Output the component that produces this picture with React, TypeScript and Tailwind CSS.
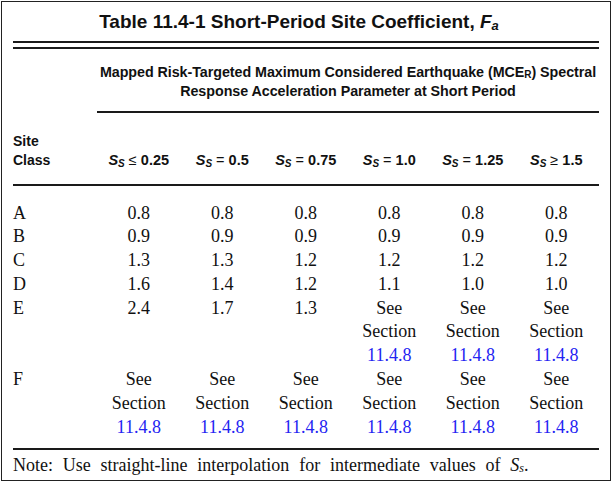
const SANS = { fontFamily: '"Liberation Sans", Arial, sans-serif' };
const SERIF = { fontFamily: '"Liberation Serif", "Times New Roman", serif' };

type Cell = string | null; // null = "See Section 11.4.8"

const rows: [string, Cell[]][] = [
  ['A', ['0.8', '0.8', '0.8', '0.8', '0.8', '0.8']],
  ['B', ['0.9', '0.9', '0.9', '0.9', '0.9', '0.9']],
  ['C', ['1.3', '1.3', '1.2', '1.2', '1.2', '1.2']],
  ['D', ['1.6', '1.4', '1.2', '1.1', '1.0', '1.0']],
  ['E', ['2.4', '1.7', '1.3', null, null, null]],
  ['F', [null, null, null, null, null, null]],
];

const headers: [string, string][] = [
  ['≤', '0.25'],
  ['=', '0.5'],
  ['=', '0.75'],
  ['=', '1.0'],
  ['=', '1.25'],
  ['≥', '1.5'],
];

function Ss() {
  return (
    <span className="italic">
      S<sub className="relative top-[2px] align-baseline text-[10px]">S</sub>
    </span>
  );
}

function SeeSection() {
  return (
    <>
      <div>See</div>
      <div>Section</div>
      <div className="text-[#2424f2]">11.4.8</div>
    </>
  );
}

export default function App() {
  return (
    <div className="h-[483px] w-[613px] bg-white p-px text-[#111]">
      <div className="h-[480px] w-[610px] overflow-hidden border border-[#222] pl-[11px] pr-[11px] pt-[8px]">
        <h1
          className="pr-[14px] text-center text-[19px] font-bold leading-[24px]"
          style={SANS}
        >
          Table 11.4-1 Short-Period Site Coefficient,{' '}
          <span className="italic">
            F<sub className="relative top-[2px] align-baseline text-[13px]">a</sub>
          </span>
        </h1>
        <div className="mt-[7px] h-[2px] bg-[#1a1a1a]" />
        <div className="mt-[4px] h-[2px] bg-[#1a1a1a]" />

        <div className="ml-[84px]">
          <p
            className="mt-[13.5px] whitespace-nowrap text-center text-[14.3px] font-bold leading-[19.5px] tracking-[-0.05px]"
            style={SANS}
          >
            Mapped Risk-Targeted Maximum Considered Earthquake (MCE
            <sub className="relative top-[1px] align-baseline text-[10px]">R</sub>) Spectral
            <br />
            Response Acceleration Parameter at Short Period
          </p>
          <div className="mt-[9px] h-[2px] bg-[#1a1a1a]" />
        </div>

        <div
          className="mt-[19.5px] grid grid-cols-[84px_repeat(6,83.5px)] items-end text-[14.5px] font-bold leading-[19px]"
          style={SANS}
        >
          <div className="text-[14px]">
            Site
            <br />
            Class
          </div>
          {headers.map(([op, v], i) => (
            <div key={i} className="text-center">
              <Ss /> <span className="font-normal">{op}</span> {v}
            </div>
          ))}
        </div>
        <div className="mt-[13.5px] h-[2px] bg-[#1a1a1a]" />

        <div className="mt-[16px] text-[18px] leading-[23.8px]" style={SERIF}>
          {rows.map(([site, cells]) => (
            <div key={site} className="grid grid-cols-[84px_repeat(6,83.5px)]">
              <div>{site}</div>
              {cells.map((c, i) => (
                <div key={i} className="text-center">
                  {c === null ? <SeeSection /> : c}
                </div>
              ))}
            </div>
          ))}
        </div>
        <div className="mt-[8.5px] h-[2px] bg-[#1a1a1a]" />

        <p
          className="mt-[5px] whitespace-nowrap text-[18px] leading-[20px] [word-spacing:5.3px]"
          style={SERIF}
        >
          Note: Use straight-line interpolation for intermediate values of{' '}
          <span className="italic">
            S<sub className="relative top-[1px] align-baseline text-[12px]">s</sub>
          </span>
          .
        </p>
      </div>
    </div>
  );
}
